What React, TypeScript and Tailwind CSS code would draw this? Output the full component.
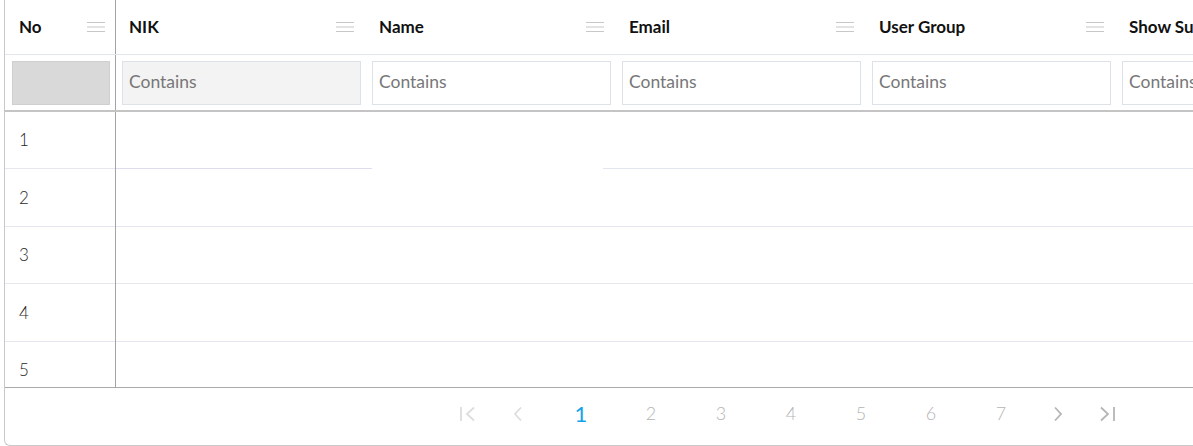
import React from 'react'

const columns = ['NIK', 'Name', 'Email', 'User Group', 'Show Summary']
const rowHeights = [57, 58, 57, 58, 57]

function MenuIcon() {
  return (
    <svg width="18" height="12" viewBox="0 0 18 12" className="shrink-0">
      <path d="M0 1.5h18M0 6h18M0 10.5h18" stroke="#c8c8c8" strokeWidth="1.2" />
    </svg>
  )
}

function Chevron({ dir, bar, color }: { dir: 'l' | 'r'; bar?: boolean; color: string }) {
  return (
    <svg width="20" height="20" viewBox="0 0 20 20">
      {dir === 'l' ? (
        <>
          {bar && <path d="M3 3v14" stroke={color} strokeWidth="1.8" />}
          <path d={bar ? 'M16 3.5l-7 6.5 7 6.5' : 'M13 3.5l-6 6.5 6 6.5'} stroke={color} strokeWidth="1.8" fill="none" />
        </>
      ) : (
        <>
          <path d={bar ? 'M4 3.5l7 6.5-7 6.5' : 'M7 3.5l6 6.5-6 6.5'} stroke={color} strokeWidth="1.8" fill="none" />
          {bar && <path d="M17 3v14" stroke={color} strokeWidth="1.8" />}
        </>
      )}
    </svg>
  )
}

export default function App() {
  return (
    <div className="w-[1193px] h-[446px] overflow-hidden bg-white font-['Lato','Open_Sans',sans-serif]">
      <div className="ml-[4px] w-[1500px] h-[446px] flex flex-col border-l border-b border-[#c9c9c9] rounded-bl-[6px]">
        {/* header */}
        <div className="flex h-[55px] border-b border-[#e3e6ec] shrink-0">
          <div className="w-[111px] shrink-0 flex items-center justify-between pl-[14px] pr-[10px] border-r border-[#a3a3a3]">
            <span className="text-[17px] font-bold text-[#111]">No</span>
            <MenuIcon />
          </div>
          {columns.map(c => (
            <div key={c} className="w-[250px] shrink-0 flex items-center justify-between pl-[13px] pr-[12px]">
              <span className="text-[17px] font-bold text-[#111] whitespace-nowrap">{c}</span>
              <MenuIcon />
            </div>
          ))}
        </div>

        {/* filters */}
        <div className="flex h-[57px] border-b-2 border-[#c4c4c4] shrink-0">
          <div className="w-[111px] shrink-0 pt-[6px] pl-[7px] border-r border-[#a3a3a3]">
            <div className="w-[98px] h-[44px] bg-[#d9d9d9] border border-[#cfcfcf]" />
          </div>
          {columns.map((c, i) => (
            <div key={c} className="w-[250px] shrink-0 pt-[6px] pl-[6px]">
              <div
                className={`w-[239px] h-[44px] flex items-center px-[6px] pb-px border border-[#dde1e8] text-[17.5px] text-[#777] ${i === 0 ? 'bg-[#f3f3f3]' : 'bg-white'}`}
              >
                Contains
              </div>
            </div>
          ))}
        </div>

        {/* body */}
        <div className="h-[276px] shrink-0 overflow-hidden border-b border-[#a9a9a9] flex">
          <div className="w-[111px] shrink-0 border-r border-[#a3a3a3] flex flex-col">
            {rowHeights.map((h, i) => (
              <div
                key={i}
                className="shrink-0 flex items-center pl-[14px] text-[17px] font-light text-[#1f1f1f] border-b border-[#e6e6ee]"
                style={{ height: h }}
              >
                {i + 1}
              </div>
            ))}
          </div>
          <div className="flex-1 flex flex-col">
            {rowHeights.map((h, i) => (
              <div key={i} className="shrink-0 flex flex-col justify-end" style={{ height: h }}>
                {i === 0 ? (
                  <div className="flex h-px">
                    <div className="w-[256px] bg-[#dedcee]" />
                    <div className="w-[231px]" />
                    <div className="flex-1 bg-[#e2e6ee]" />
                  </div>
                ) : (
                  <div className="h-px bg-[#e6e6ee]" />
                )}
              </div>
            ))}
          </div>
        </div>

        {/* pagination */}
        <div className="flex-1 flex items-center pl-[438px] pb-[6px]">
          <div className="w-[50px] flex justify-center"><Chevron dir="l" bar color="#dddddd" /></div>
          <div className="w-[50px] flex justify-center"><Chevron dir="l" color="#dddddd" /></div>
          <div className="ml-[3px] flex items-center">
            {[1, 2, 3, 4, 5, 6, 7].map(n => (
              <div
                key={n}
                className={`w-[70px] text-center ${n === 1 ? 'text-[22px] text-[#14a2ea]' : 'text-[18px] font-light text-[#b5b5b5]'}`}
              >
                {n}
              </div>
            ))}
          </div>
          <div className="w-[44px] flex justify-center"><Chevron dir="r" color="#b5b5b5" /></div>
          <div className="w-[54px] flex justify-center"><Chevron dir="r" bar color="#b5b5b5" /></div>
        </div>
      </div>
    </div>
  )
}
